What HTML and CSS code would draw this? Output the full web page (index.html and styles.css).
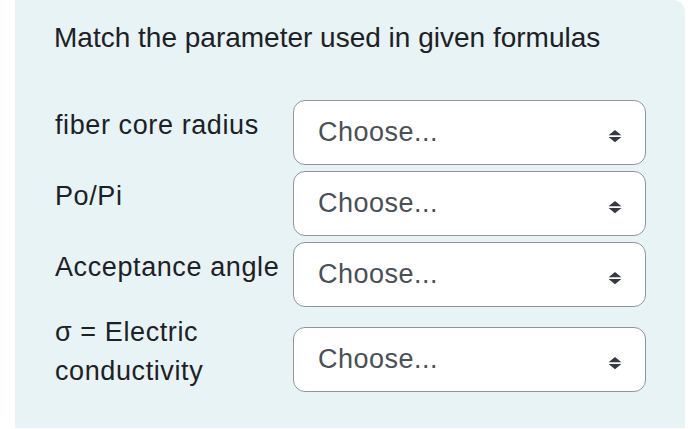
FILE: index.html
```html
<!DOCTYPE html>
<html>
<head>
<meta charset="utf-8">
<link rel="stylesheet" href="styles.css">
</head>
<body>
<div class="panel">
  <div class="title">Match the parameter used in given formulas</div>
  <div class="rows">
    <div class="row">
      <div class="label">fiber core radius</div>
      <div class="select"><span class="choose">Choose...</span><svg class="arrows" viewBox="0 0 12 11"><path d="M6 0 L11.5 4.4 H0.5 Z M0.5 6 H11.5 L6 10.4 Z" fill="#343a40"/></svg></div>
    </div>
    <div class="row">
      <div class="label">Po/Pi</div>
      <div class="select"><span class="choose">Choose...</span><svg class="arrows" viewBox="0 0 12 11"><path d="M6 0 L11.5 4.4 H0.5 Z M0.5 6 H11.5 L6 10.4 Z" fill="#343a40"/></svg></div>
    </div>
    <div class="row">
      <div class="label">Acceptance angle</div>
      <div class="select"><span class="choose">Choose...</span><svg class="arrows" viewBox="0 0 12 11"><path d="M6 0 L11.5 4.4 H0.5 Z M0.5 6 H11.5 L6 10.4 Z" fill="#343a40"/></svg></div>
    </div>
    <div class="row">
      <div class="label">σ = Electric conductivity</div>
      <div class="select"><span class="choose">Choose...</span><svg class="arrows" viewBox="0 0 12 11"><path d="M6 0 L11.5 4.4 H0.5 Z M0.5 6 H11.5 L6 10.4 Z" fill="#343a40"/></svg></div>
    </div>
  </div>
</div>
</body>
</html>
```

FILE: styles.css
```css
html, body {
  margin: 0;
  padding: 0;
  background: #ffffff;
}
body {
  font-family: "Liberation Sans", Arial, sans-serif;
  color: #1d2125;
}
.panel {
  margin-left: 15px;
  width: 670px;
  height: 428px;
  box-sizing: border-box;
  background: #e7f3f5;
  padding: 21px 39px 0 40px;
  border-radius: 0 12px 0 0;
}
.title {
  font-size: 28px;
  line-height: 34px;
  margin-left: -1px;
  margin-bottom: 45px;
}
.rows {
  display: flex;
  flex-direction: column;
  gap: 6px;
}
.row {
  display: flex;
  align-items: center;
}
.label {
  width: 232px;
  flex: none;
  padding-right: 6px;
  padding-bottom: 14px;
  font-size: 27px;
  letter-spacing: 0.6px;
  line-height: 39px;
}
.select {
  flex: 1;
  height: 65px;
  box-sizing: border-box;
  background: #ffffff;
  border: 1.5px solid #8f959e;
  border-radius: 12px;
  display: flex;
  align-items: center;
  justify-content: space-between;
  padding: 0 23px 0 24px;
}
.choose {
  font-size: 27px;
  letter-spacing: 0.5px;
  color: #495057;
}
.arrows {
  flex: none;
  width: 14px;
  height: 13px;
  margin-top: 8px;
}
```
